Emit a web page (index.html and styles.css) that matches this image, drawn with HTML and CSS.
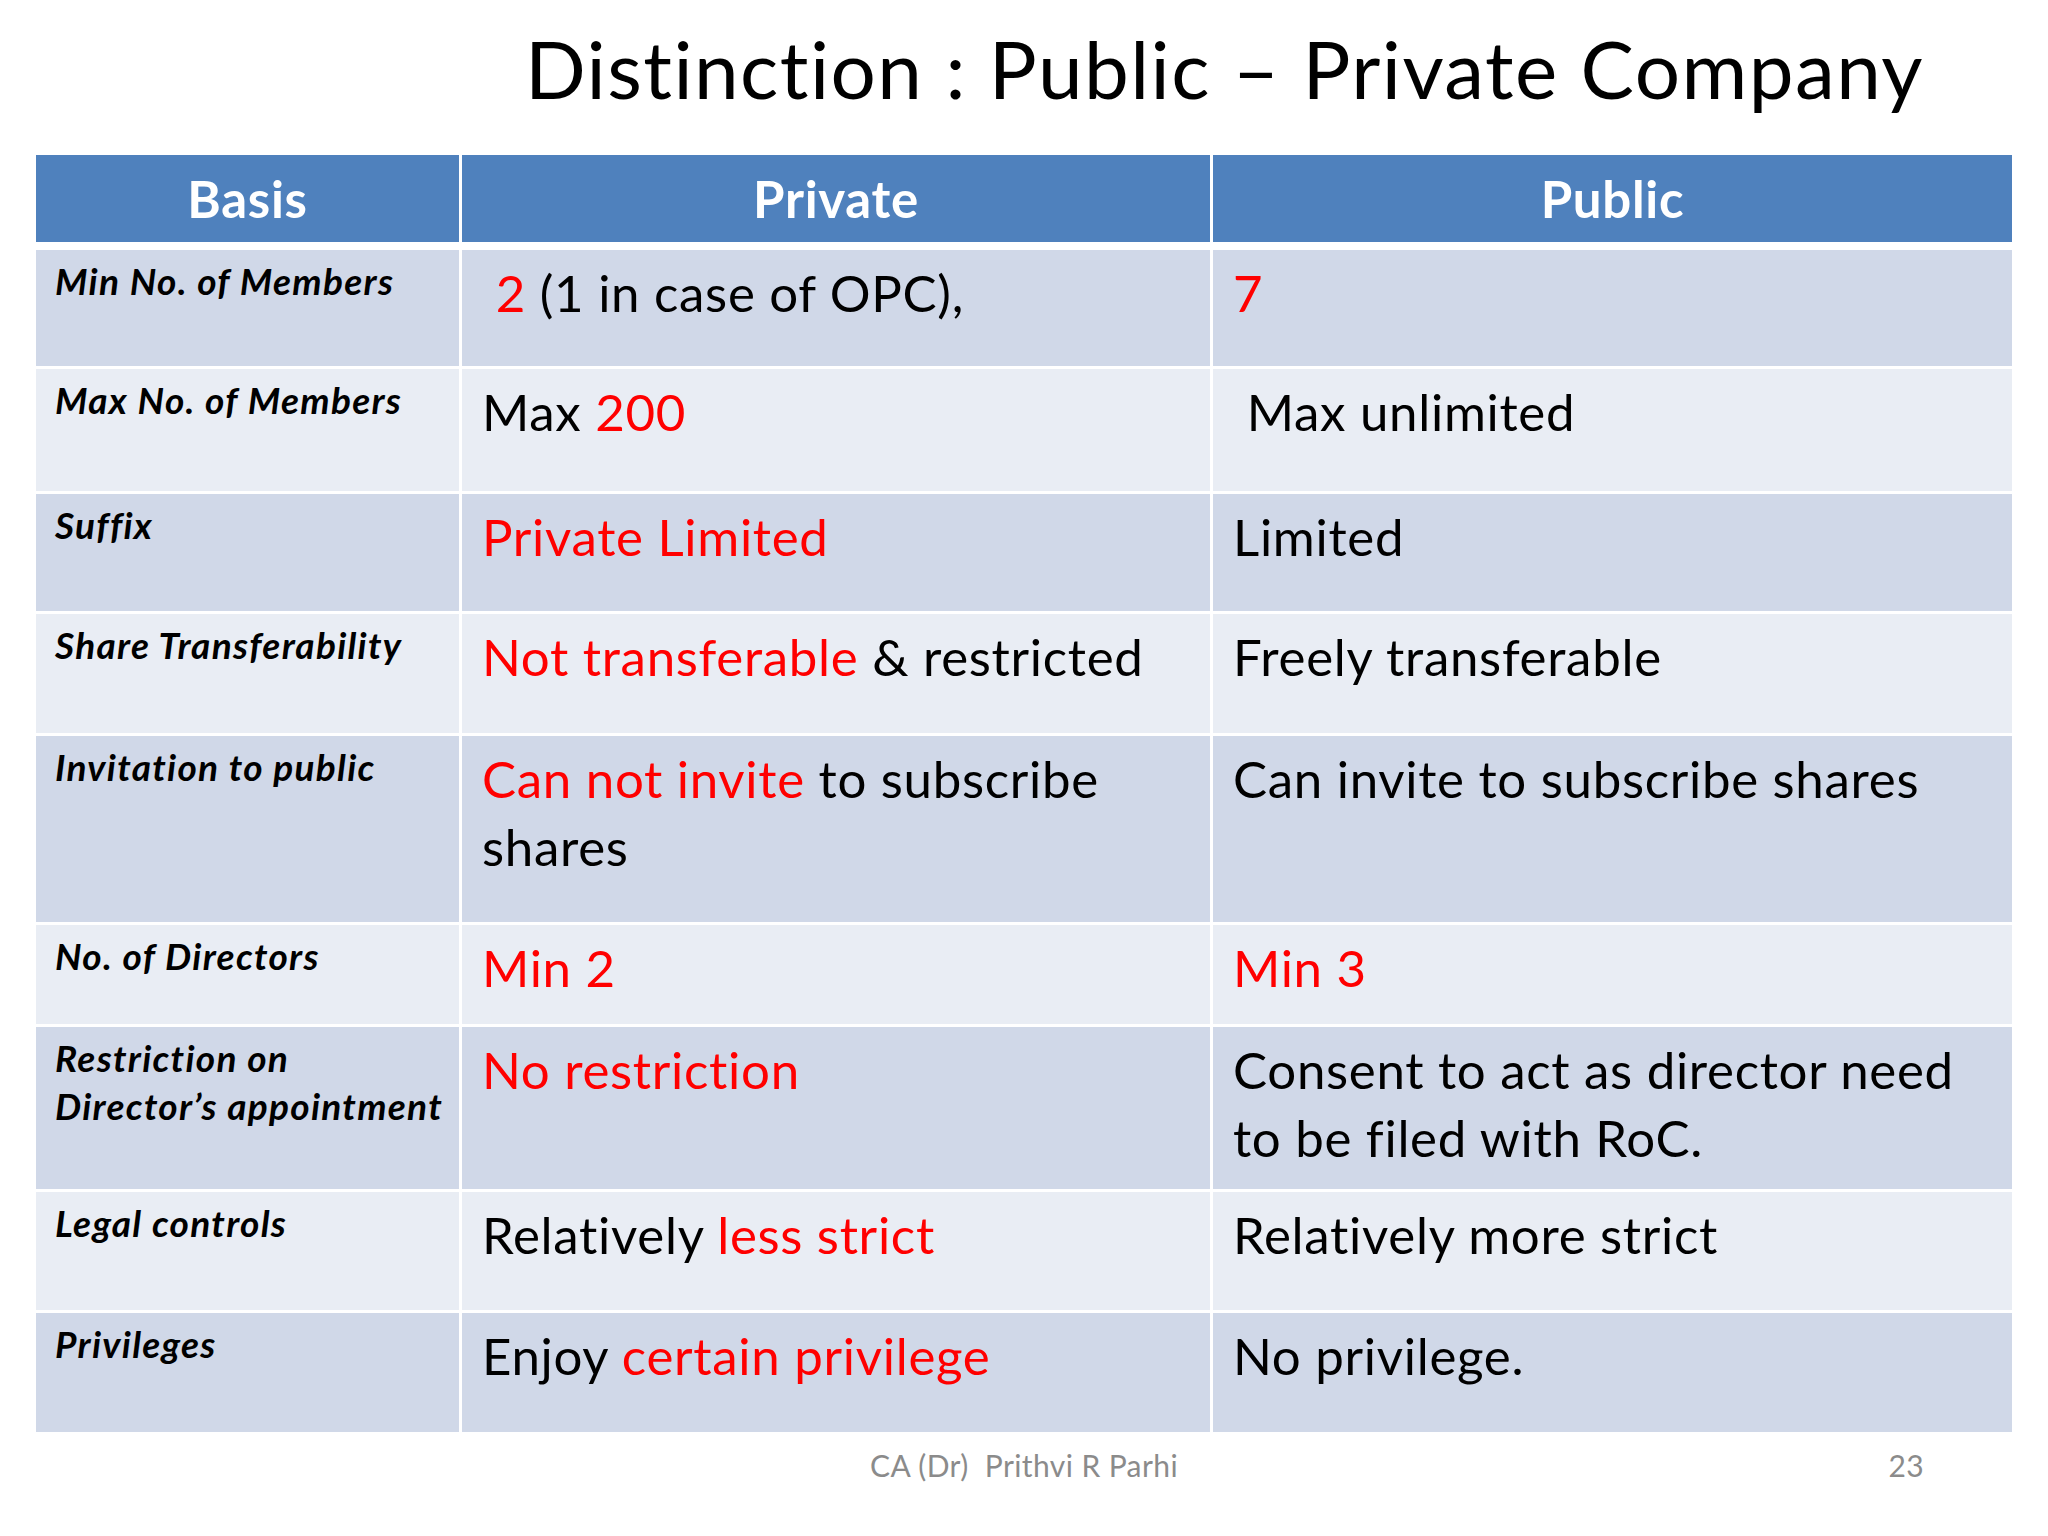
FILE: index.html
```html
<!DOCTYPE html>
<html lang="en">
<head>
<meta charset="utf-8">
<title>Distinction : Public – Private Company</title>
<link rel="stylesheet" href="styles.css">
</head>
<body>
<div class="slide">
  <h1 class="title">Distinction : Public – Private Company</h1>

  <div class="table">
    <div class="row head">
      <div class="cell">Basis</div>
      <div class="cell">Private</div>
      <div class="cell">Public</div>
    </div>
    <div class="row odd">
      <div class="cell basis">Min No. of Members</div>
      <div class="cell">&nbsp;<span class="red">2</span> (1 in case of OPC),</div>
      <div class="cell"><span class="red">7</span></div>
    </div>
    <div class="row even">
      <div class="cell basis">Max No. of Members</div>
      <div class="cell">Max <span class="red">200</span></div>
      <div class="cell">&nbsp;Max unlimited</div>
    </div>
    <div class="row odd">
      <div class="cell basis">Suffix</div>
      <div class="cell"><span class="red">Private Limited</span></div>
      <div class="cell">Limited</div>
    </div>
    <div class="row even">
      <div class="cell basis">Share Transferability</div>
      <div class="cell"><span class="red">Not transferable</span> &amp; restricted</div>
      <div class="cell">Freely transferable</div>
    </div>
    <div class="row odd">
      <div class="cell basis">Invitation to public</div>
      <div class="cell"><span class="red">Can not invite</span> to subscribe<br>shares</div>
      <div class="cell">Can invite to subscribe shares</div>
    </div>
    <div class="row even">
      <div class="cell basis">No. of Directors</div>
      <div class="cell"><span class="red">Min 2</span></div>
      <div class="cell"><span class="red">Min 3</span></div>
    </div>
    <div class="row odd">
      <div class="cell basis">Restriction on<br>Director’s appointment</div>
      <div class="cell"><span class="red">No restriction</span></div>
      <div class="cell">Consent to act as director need<br>to be filed with RoC.</div>
    </div>
    <div class="row even">
      <div class="cell basis">Legal controls</div>
      <div class="cell">Relatively <span class="red">less strict</span></div>
      <div class="cell">Relatively more strict</div>
    </div>
    <div class="row odd">
      <div class="cell basis">Privileges</div>
      <div class="cell">Enjoy <span class="red">certain privilege</span></div>
      <div class="cell">No privilege.</div>
    </div>
  </div>

  <div class="footer">
    <div></div>
    <div class="author">CA (Dr)&nbsp; Prithvi R Parhi</div>
    <div class="page">23</div>
  </div>
</div>
</body>
</html>
```

FILE: styles.css
```css
html, body {
  margin: 0;
  padding: 0;
  background: #ffffff;
}

.slide {
  width: 2048px;
  height: 1536px;
  display: flex;
  flex-direction: column;
  font-family: "Lato", "Carlito", "Open Sans", sans-serif;
  font-variant-ligatures: none;
  font-feature-settings: "liga" 0, "clig" 0;
  color: #000000;
  overflow: hidden;
}

.title {
  margin: 0;
  box-sizing: border-box;
  height: 155px;
  padding: 20px 124px 0 0;
  text-align: right;
  font-size: 80px;
  line-height: 96px;
  font-weight: 400;
  letter-spacing: 1.45px;
  white-space: nowrap;
}

.table {
  margin-left: 36px;
  width: 1976px;
  display: grid;
  grid-template-columns: 423px 748px 799px;
  grid-template-rows: 92px 116px 122px 117px 119px 186px 99px 162px 118px 119px;
  column-gap: 3px;
  row-gap: 3px;
  background: #ffffff;
}

.row {
  display: contents;
}

.cell {
  box-sizing: border-box;
  padding: 9px 20px 0 20px;
  font-size: 51px;
  line-height: 68px;
  letter-spacing: 0.7px;
  white-space: nowrap;
}

.row.odd .cell {
  background: #d0d8e8;
}

.row.even .cell {
  background: #e9edf4;
}

.row.head .cell {
  background: #4f81bd;
  border-bottom: 5px solid #ffffff;
  color: #ffffff;
  font-weight: 700;
  padding: 0;
  display: flex;
  align-items: center;
  justify-content: center;
}

.cell.basis {
  padding: 7px 10px 0 19px;
  font-size: 37px;
  line-height: 48px;
  letter-spacing: 1.3px;
  font-weight: 700;
  font-style: italic;
}

.red {
  color: #ff0000;
}

.footer {
  margin-top: 15px;
  display: grid;
  grid-template-columns: 1fr auto 1fr;
  font-size: 30px;
  line-height: 36px;
  letter-spacing: 0.4px;
  color: #8b8b8b;
}

.author {
  white-space: nowrap;
}

.page {
  text-align: right;
  padding-right: 124px;
}
```
